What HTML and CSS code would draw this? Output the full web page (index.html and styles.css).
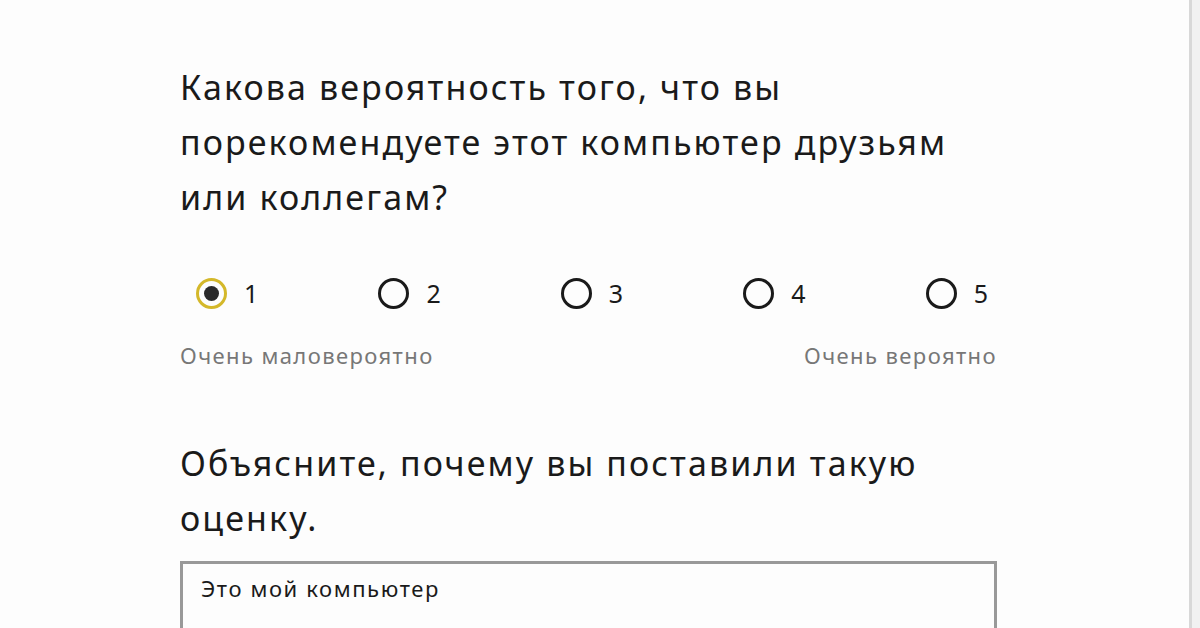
FILE: index.html
```
<!DOCTYPE html>
<html lang="ru">
<head>
<meta charset="utf-8">
<link rel="stylesheet" href="styles.css">
</head>
<body>
<div class="page">
  <main class="survey">
    <h1 class="question">Какова вероятность того, что вы порекомендуете этот компьютер друзьям или коллегам?</h1>
    <div class="scale">
      <label class="option"><span class="radio checked"><span class="dot"></span></span><span class="num">1</span></label>
      <label class="option"><span class="radio"></span><span class="num">2</span></label>
      <label class="option"><span class="radio"></span><span class="num">3</span></label>
      <label class="option"><span class="radio"></span><span class="num">4</span></label>
      <label class="option"><span class="radio"></span><span class="num">5</span></label>
    </div>
    <div class="ends">
      <span>Очень маловероятно</span>
      <span>Очень вероятно</span>
    </div>
    <h2 class="question second">Объясните, почему вы поставили такую оценку.</h2>
    <div class="answer">Это мой компьютер</div>
  </main>
  <div class="edge"></div>
</div>
</body>
</html>
```
FILE: styles.css
```
html, body {
  margin: 0;
  padding: 0;
  height: 100%;
  overflow: hidden;
}
body {
  background: #fdfdfd;
  font-family: "Noto Sans", "Open Sans", sans-serif;
  color: #1e1e1e;
}
.page {
  display: flex;
  height: 628px;
}
.survey {
  flex: 1;
  padding: 60px 0 0 180px;
  box-sizing: border-box;
}
.question {
  width: 795px;
  margin: 0;
  font-size: 34px;
  font-weight: 400;
  letter-spacing: 2.1px;
  line-height: 55px;
  color: #1a1a1a;
}
.scale {
  width: 817px;
  box-sizing: border-box;
  display: flex;
  justify-content: space-between;
  padding: 0 9px 0 16px;
  margin-top: 51px;
}
.option {
  display: flex;
  align-items: center;
  gap: 17px;
}
.radio {
  width: 31px;
  height: 31px;
  box-sizing: border-box;
  border: 3px solid #1a1a1a;
  border-radius: 50%;
  display: flex;
  align-items: center;
  justify-content: center;
}
.radio.checked {
  border-color: #d4b82a;
}
.dot {
  width: 15px;
  height: 15px;
  border-radius: 50%;
  background: #2a2a2a;
}
.num {
  font-size: 25px;
  color: #1a1a1a;
}
.ends {
  width: 817px;
  display: flex;
  justify-content: space-between;
  margin-top: 30px;
  font-size: 22px;
  letter-spacing: 1.4px;
  color: #777;
}
.second {
  margin-top: 66px;
}
.answer {
  width: 817px;
  height: 80px;
  margin-top: 15px;
  box-sizing: border-box;
  border: 3px solid #999;
  padding: 9px 18px;
  font-size: 22px;
  letter-spacing: 1.6px;
  color: #1a1a1a;
}
.edge {
  width: 8px;
  border-left: 3px solid #d8d8d8;
  background: #f1f1f1;
}
```
